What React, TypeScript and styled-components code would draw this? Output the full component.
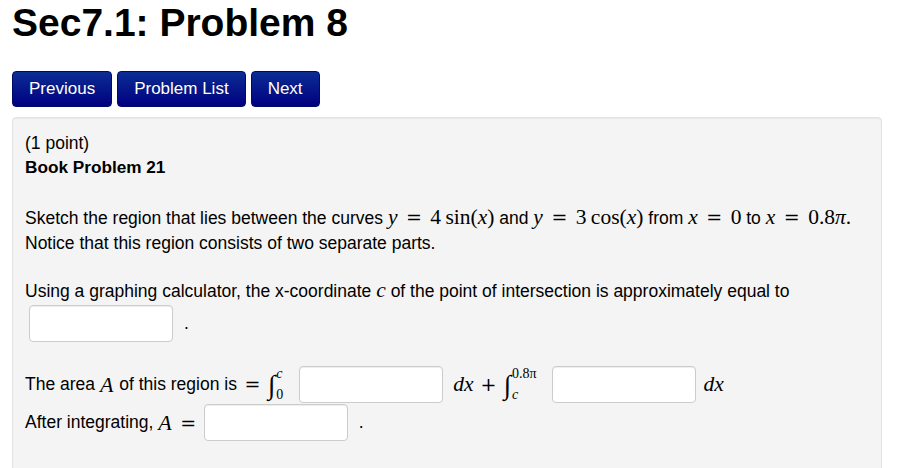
import React from "react";
import styled, { createGlobalStyle } from "styled-components";

const GlobalStyle = createGlobalStyle`
  html, body {
    margin: 0;
    padding: 0;
    background: #ffffff;
  }
  body {
    font-family: "Liberation Sans", Arial, sans-serif;
    color: #000000;
  }
`;

const Page = styled.div`
  width: 897px;
  height: 468px;
  box-sizing: border-box;
  padding: 1px 16px 0 12px;
  overflow: hidden;
`;

const Title = styled.h1`
  margin: 0;
  font-size: 39px;
  line-height: 44px;
  font-weight: bold;
`;

const NavBar = styled.div`
  display: flex;
  gap: 5px;
  margin-top: 26px;
`;

const NavButton = styled.button`
  height: 36px;
  padding: 0 16px;
  font-family: inherit;
  font-size: 17px;
  color: #ffffff;
  background: linear-gradient(to bottom, #0c2d94, #000080);
  border: 1px solid #000a66;
  border-radius: 4px;
  text-shadow: 0 -1px 0 rgba(0, 0, 0, 0.25);
  cursor: pointer;
`;

const Well = styled.div`
  margin-top: 10px;
  width: 870px;
  min-height: 400px;
  box-sizing: border-box;
  padding: 13px 12px 40px;
  background: #f4f4f4;
  border: 1px solid #e3e3e3;
  border-radius: 4px;
  box-shadow: inset 0 1px 1px rgba(0, 0, 0, 0.05);
  font-size: 17.5px;
`;

const Line = styled.div`
  line-height: 24px;
  white-space: nowrap;
`;

const Heading = styled.div`
  font-weight: bold;
  font-size: 17.2px;
  line-height: 24px;
`;

const Para = styled.div<{ $top: number }>`
  margin-top: ${(p) => p.$top}px;
  line-height: 25px;
  white-space: nowrap;
`;

const M = styled.span`
  font-family: "Liberation Serif", "DejaVu Serif", serif;
  font-size: 21.5px;
  font-style: normal;

  i {
    font-style: italic;
  }
`;

const BigVar = styled.i`
  font-size: 22px;
  margin-right: 1px;
`;

const Op = styled.span<{ $m?: number }>`
  font-family: "DejaVu Serif", "Liberation Serif", serif;
  font-size: 19px;
  margin: 0 ${(p) => p.$m ?? 8.5}px;
`;

const Row = styled.div<{ $top: number }>`
  display: flex;
  align-items: center;
  margin-top: ${(p) => p.$top}px;
  white-space: pre;
`;

const Answer = styled.input.attrs({ type: "text" })<{ $left?: number }>`
  width: 144px;
  height: 37px;
  box-sizing: border-box;
  margin: 0 0 0 ${(p) => p.$left ?? 0}px;
  padding: 4px 6px;
  background: #ffffff;
  border: 1px solid #cccccc;
  border-radius: 4px;
  box-shadow: inset 0 1px 1px rgba(0, 0, 0, 0.075);
  font-size: 16px;
`;

const Gap = styled.span<{ $w: number }>`
  display: inline-block;
  width: ${(p) => p.$w}px;
`;

const IntWrap = styled.span`
  display: inline-flex;
  align-items: stretch;
  font-family: "Liberation Serif", "DejaVu Serif", serif;
  height: 30px;
`;

const IntSign = styled.span`
  font-size: 27px;
  line-height: 30px;
  font-style: italic;
`;

const Limits = styled.span`
  display: flex;
  flex-direction: column;
  justify-content: space-between;
  font-size: 14px;
  line-height: 13px;
  margin-left: 1px;
  margin-top: -3px;
  margin-bottom: -1px;
`;

const Integral = ({
  lower,
  upper,
  italicLower,
  italicUpper,
}: {
  lower: string;
  upper: string;
  italicLower?: boolean;
  italicUpper?: boolean;
}) => (
  <IntWrap>
    <IntSign>∫</IntSign>
    <Limits>
      <span>{italicUpper ? <i>{upper}</i> : upper}</span>
      <span>{italicLower ? <i>{lower}</i> : lower}</span>
    </Limits>
  </IntWrap>
);

export default function App() {
  return (
    <Page>
      <GlobalStyle />
      <Title>Sec7.1: Problem 8</Title>
      <NavBar>
        <NavButton>Previous</NavButton>
        <NavButton>Problem List</NavButton>
        <NavButton>Next</NavButton>
      </NavBar>
      <Well>
        <Line>(1 point)</Line>
        <Heading>Book Problem 21</Heading>
        <Para $top={26}>
          <div>
            Sketch the region that lies between the curves{" "}
            <M>
              <i>y</i>
              <Op>=</Op>4{"\u2009"}sin(<i>x</i>)
            </M>{" "}
            and{" "}
            <M>
              <i>y</i>
              <Op>=</Op>3{"\u2009"}cos(<i>x</i>)
            </M>{" "}
            from{" "}
            <M>
              <i>x</i>
              <Op>=</Op>0
            </M>{" "}
            to{" "}
            <M>
              <i>x</i>
              <Op>=</Op>0.8<i>π</i>.
            </M>
          </div>
          <div>Notice that this region consists of two separate parts.</div>
        </Para>
        <Para $top={22}>
          Using a graphing calculator, the x-coordinate{" "}
          <M>
            <i>c</i>
          </M>{" "}
          of the point of intersection is approximately equal to
        </Para>
        <Row $top={1}>
          <Answer $left={4} />
          <Gap $w={11} />
          <span>.</span>
        </Row>
        <Row $top={24}>
          <span>The area </span>
          <M>
            <BigVar>A</BigVar>
          </M>
          <span> of this region is</span>
          <M>
            <Op $m={7.5}>=</Op>
          </M>
          <Integral lower="0" upper="c" italicUpper />
          <Gap $w={16} />
          <Answer />
          <Gap $w={10} />
          <M>
            <i>dx</i>
            <Op $m={7}>+</Op>
          </M>
          <Integral lower="c" upper="0.8π" italicLower />
          <Gap $w={16} />
          <Answer />
          <Gap $w={7} />
          <M>
            <i>dx</i>
          </M>
        </Row>
        <Row $top={1}>
          <span>After integrating, </span>
          <M>
            <BigVar>A</BigVar>
            <Op $m={7.5}>=</Op>
          </M>
          <Answer />
          <Gap $w={11} />
          <span>.</span>
        </Row>
      </Well>
    </Page>
  );
}
